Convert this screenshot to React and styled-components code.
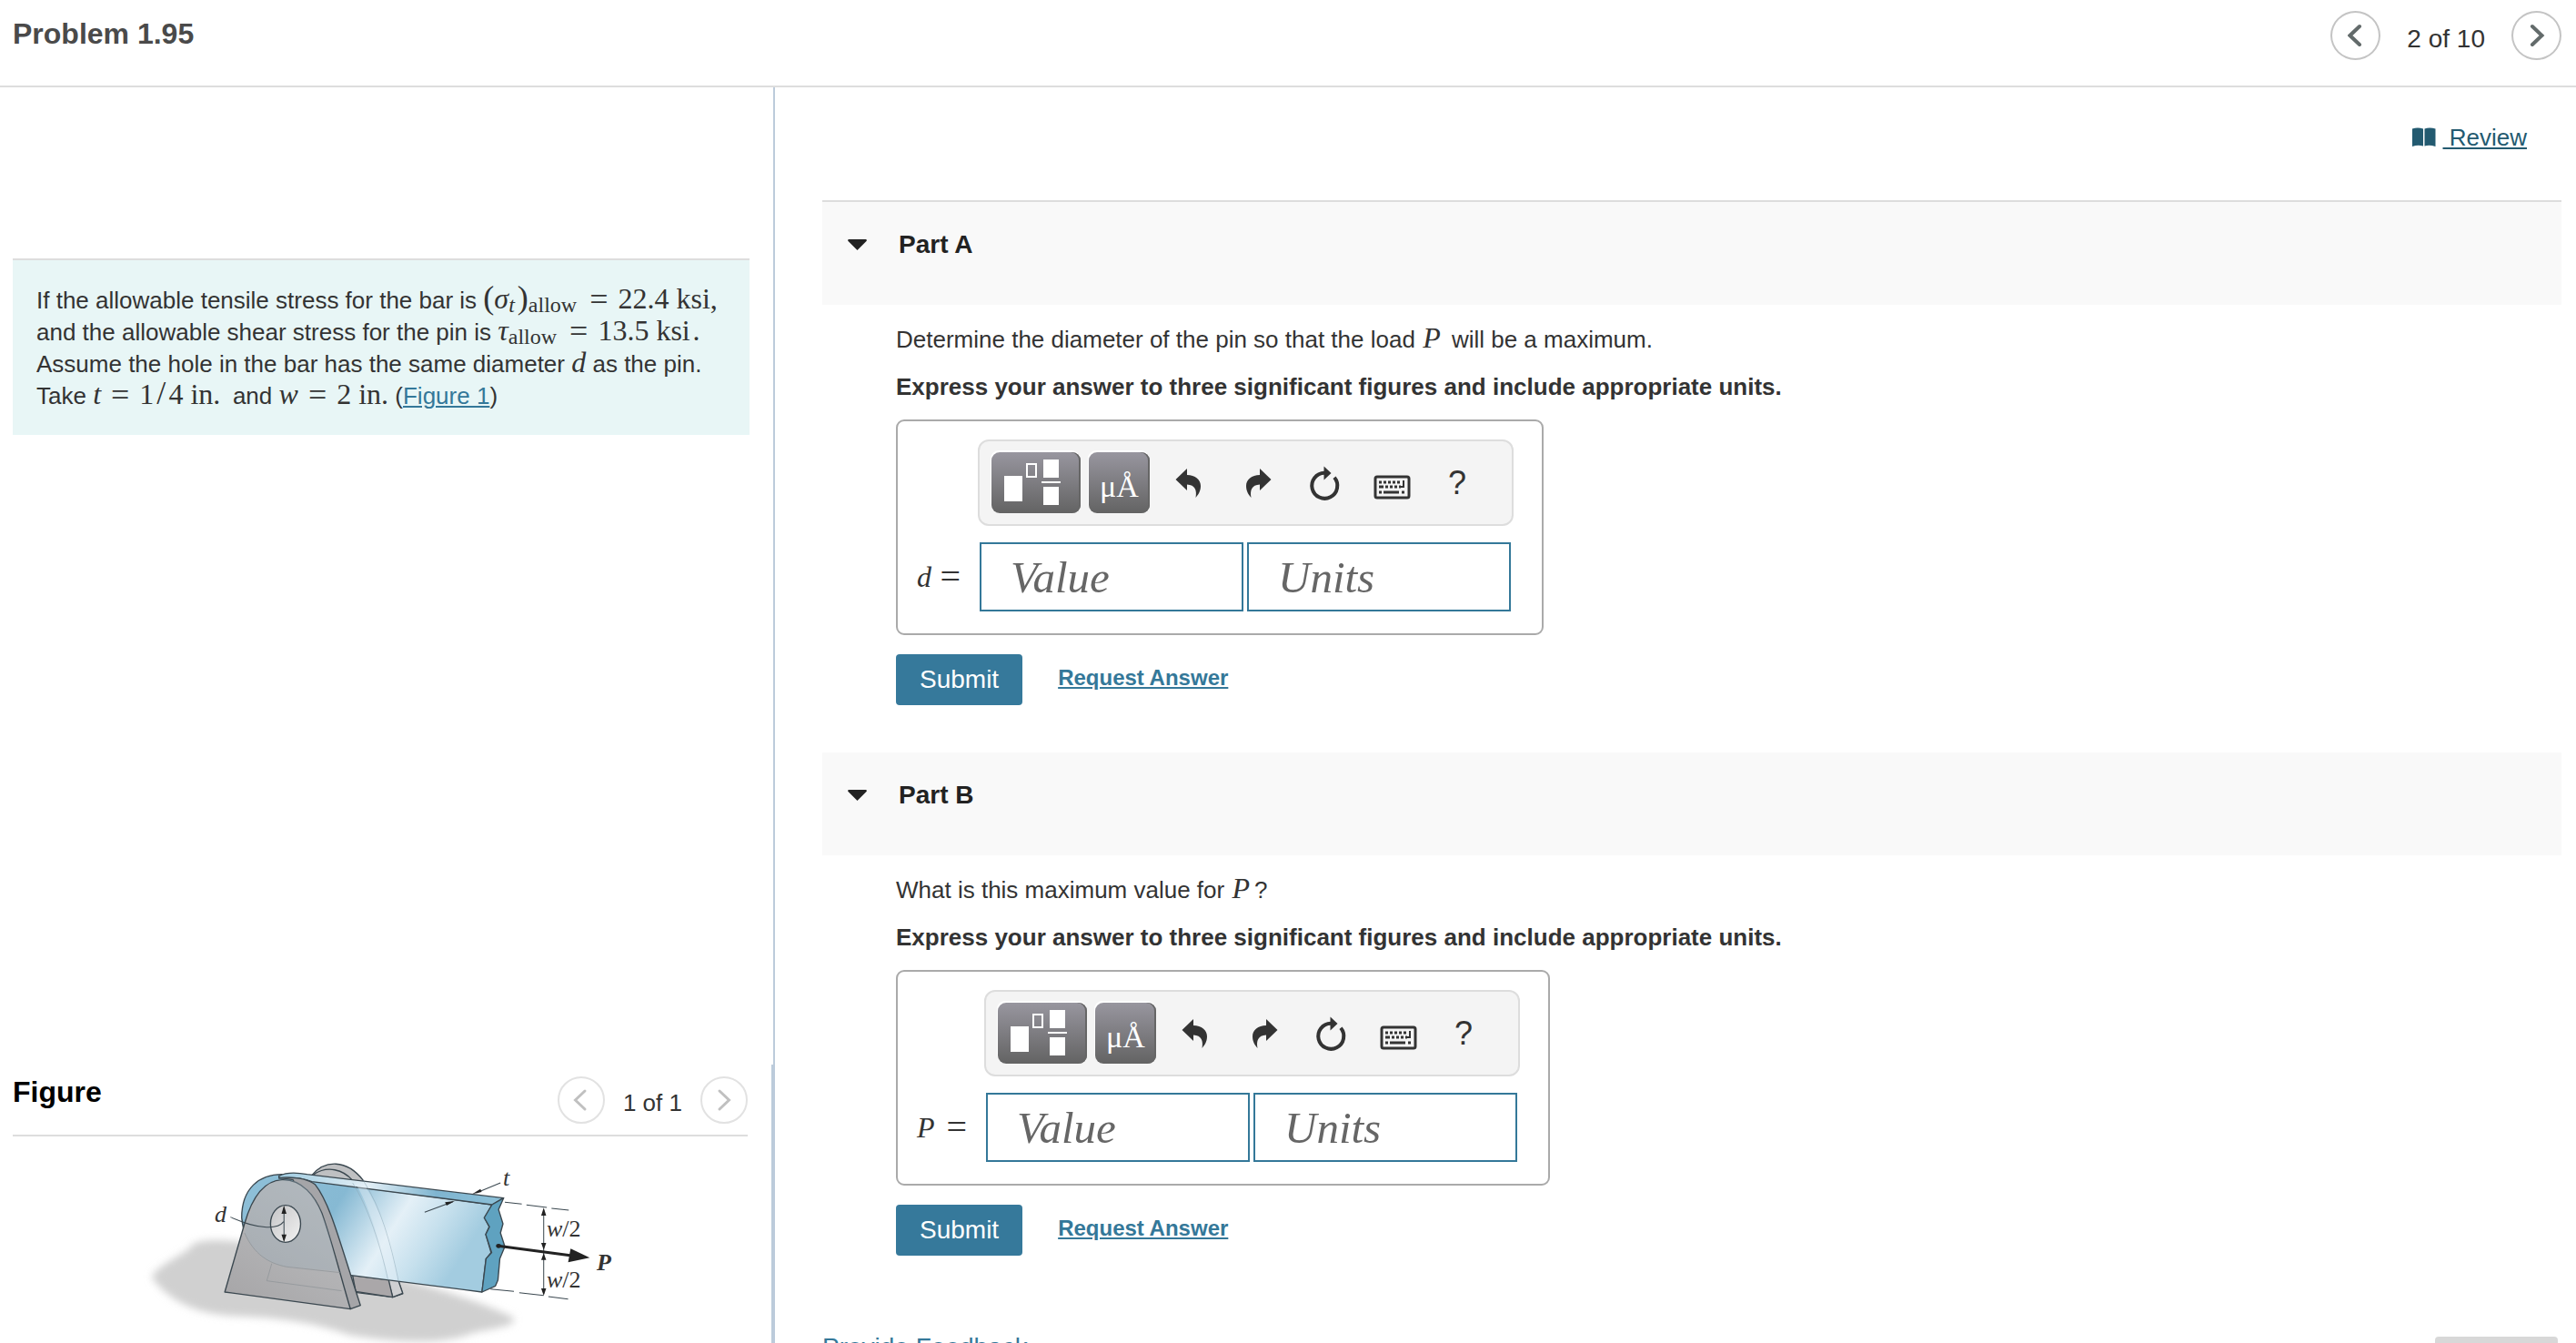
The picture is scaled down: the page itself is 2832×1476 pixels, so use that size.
import React from 'react';
import styled, { createGlobalStyle } from 'styled-components';

const color_text = '#333';
const color_rule = '#ddd';
const color_divider = '#bccbdb';
const color_link = '#347899';
const color_link_dark = '#235a70';

const sans = `'Liberation Sans', Arial, sans-serif`;
const serif = `'Liberation Serif', 'Times New Roman', serif`;

const parts = [
	{
		id: 'a',
		title: 'Part A',
		question: ['Determine the diameter of the pin so that the load ', ' will be a maximum.'],
		symbol: 'd',
		labelWidth: 48,
	},
	{
		id: 'b',
		title: 'Part B',
		question: ['What is this maximum value for ', '?'],
		symbol: 'P',
		labelWidth: 55,
	},
];

const App = () => {
	return (
		<Page>
			<GlobalStyle />
			<Header>
				<Title>Problem 1.95</Title>
				<Pager label="2 of 10" />
			</Header>
			<Columns>
				<Sidebar>
					<Intro>
						<Statement>
							If the allowable tensile stress for the bar is{' '}
							<Formula>
								<Paren>(</Paren>
								<Var>σ</Var>
								<Sub>
									<i>t</i>
								</Sub>
								<Paren>)</Paren>
								<Sub>allow</Sub>
								<Equals>=</Equals>22.4 ksi,
							</Formula>{' '}
							and the allowable shear stress for the pin is{' '}
							<Formula>
								<Var>τ</Var>
								<Sub>allow</Sub>
								<Equals>=</Equals>13.5 ksi&#8202;.
							</Formula>{' '}
							Assume the hole in the bar has the same diameter <Var>d</Var> as
							the pin. Take{' '}
							<Formula>
								<Var>t</Var>
								<Equals>=</Equals>1<Slash>/</Slash>4 in.&#8201;
							</Formula>{' '}
							and{' '}
							<Formula>
								<Var>w</Var>
								<Equals>=</Equals>2 in.
							</Formula>{' '}
							(<Link href="#figure">Figure 1</Link>)
						</Statement>
					</Intro>
					<FigurePane id="figure">
						<FigureHeader>
							<FigureTitle>Figure</FigureTitle>
							<Pager small label="1 of 1" />
						</FigureHeader>
						<BarFigure />
					</FigurePane>
				</Sidebar>
				<Main>
					<ReviewRow>
						<ReviewLink href="#review">
							<BookIcon />
							<span>&nbsp;Review</span>
						</ReviewLink>
					</ReviewRow>
					{parts.map((part, index) => (
						<Part key={part.id} part={part} first={index === 0} />
					))}
					<Footer>
						<FeedbackLink href="#feedback">Provide Feedback</FeedbackLink>
						<NextButton type="button" aria-label="Next" />
					</Footer>
				</Main>
			</Columns>
		</Page>
	);
};

export default App;

const Pager = ({ label, small }) => (
	<PagerRow $small={small}>
		<RoundButton type="button" aria-label="Previous" $small={small}>
			<svg width="18" height="26" viewBox="0 0 18 26">
				<path d="M13 3 L2.5 13 L13 23" />
			</svg>
		</RoundButton>
		<PagerLabel $small={small}>{label}</PagerLabel>
		<RoundButton type="button" aria-label="Next" $small={small}>
			<svg width="18" height="26" viewBox="0 0 18 26">
				<path d="M4 3 L14.5 13 L4 23" />
			</svg>
		</RoundButton>
	</PagerRow>
);

const Part = ({ part, first }) => (
	<section>
		<PartHeader $first={first}>
			<svg width="21" height="12" viewBox="0 0 21 12">
				<path d="M1 0 H20 Q21.5 0.5 20.5 2 L10.5 12 L0.5 2 Q-0.5 0.5 1 0 Z" fill="#222" />
			</svg>
			<h2>{part.title}</h2>
		</PartHeader>
		<PartBody>
			<p>
				{part.question[0]}
				<QuestionVar>P</QuestionVar>
				{part.question[1]}
			</p>
			<p>
				<b>
					Express your answer to three significant figures and include
					appropriate units.
				</b>
			</p>
			<AnswerBox>
				<Toolbar />
				<AnswerLabel htmlFor={`value-${part.id}`} $width={part.labelWidth}>
					<Var>{part.symbol}</Var>
					<LabelEquals>=</LabelEquals>
				</AnswerLabel>
				<Fields>
					<Field id={`value-${part.id}`} type="text" placeholder="Value" />
					<Field type="text" placeholder="Units" aria-label="Units" />
				</Fields>
			</AnswerBox>
			<Actions>
				<SubmitButton type="submit">Submit</SubmitButton>
				<RequestLink href="#answer">Request Answer</RequestLink>
			</Actions>
		</PartBody>
	</section>
);

const arrowPath =
	'M6.5 16 L19 4 V11 C28 11 34 16 34 23 C34 29 31 33 28.5 36 C30 28 28 22 19 21.5 V28 Z';

const Toolbar = () => (
	<ToolbarBox>
		<GreyButton type="button" aria-label="Templates" $wide>
			<svg width="70" height="54" viewBox="0 0 70 54" fill="#fff">
				<rect x="0" y="19" width="20" height="28" />
				<rect x="25" y="6" width="10" height="14" fill="none" stroke="#fff" strokeWidth="2" />
				<rect x="43" y="1" width="17" height="20" />
				<rect x="41" y="25" width="21" height="2" />
				<rect x="43" y="31" width="17" height="20" />
			</svg>
		</GreyButton>
		<GreyButton type="button">μÅ</GreyButton>
		<Tools>
			<ToolButton type="button" aria-label="Undo">
				<svg width="40" height="40" viewBox="0 0 40 40">
					<path d={arrowPath} fill={color_text} />
				</svg>
			</ToolButton>
			<ToolButton type="button" aria-label="Redo">
				<svg width="40" height="40" viewBox="0 0 40 40">
					<path d={arrowPath} fill={color_text} transform="translate(44 0) scale(-1 1)" />
				</svg>
			</ToolButton>
			<ToolButton type="button" aria-label="Reset">
				<svg width="40" height="40" viewBox="0 0 40 40">
					<path
						d="M33 13.8 A14 14 0 1 1 22 8.8"
						fill="none"
						stroke={color_text}
						strokeWidth="4"
					/>
					<path d="M21.5 1.5 L29.5 9 L21.5 16.5 Z" fill={color_text} />
				</svg>
			</ToolButton>
			<ToolButton type="button" aria-label="Keyboard">
				<svg width="40" height="40" viewBox="0 0 40 40" fill="none" stroke={color_text}>
					<rect x="4" y="13" width="37" height="23" rx="2" strokeWidth="3" />
					<path d="M8 19 H32" strokeWidth="3" strokeDasharray="3 2" />
					<path d="M8 24 H32" strokeWidth="3" strokeDasharray="5 2 3 2 3 2 3 2" />
					<path d="M8 30 H11 M13 30 H30 M33 30 H36" strokeWidth="3" />
					<path d="M35 17 V24 H31" strokeWidth="2" />
				</svg>
			</ToolButton>
			<ToolButton type="button">?</ToolButton>
		</Tools>
	</ToolbarBox>
);

const BookIcon = () => (
	<svg width="26" height="22" viewBox="0 0 26 22">
		<path
			d="M0 1.5 Q6 -0.5 12 1.5 V20.5 Q6 19 0 21 Z M13.5 1.5 Q19 -0.5 25.5 1.5 V21 Q19 19 13.5 20.5 Z"
			fill={color_link_dark}
		/>
	</svg>
);

// Bar held by a pin between two brackets, pulled by P
const BarFigure = () => (
	<FigureSvg width="540" height="216" viewBox="0 0 540 216">
		<defs>
			<filter id="soft" x="-10%" y="-20%" width="120%" height="140%">
				<feGaussianBlur stdDeviation="12" />
			</filter>
			<linearGradient id="bar" x1="0" y1="0" x2="1" y2="0.3">
				<stop offset="0" stopColor="#8fc0d8" />
				<stop offset="0.42" stopColor="#86b9d3" />
				<stop offset="0.68" stopColor="#e4f0f7" />
				<stop offset="0.84" stopColor="#c6e0ed" />
				<stop offset="1" stopColor="#a3cce0" />
			</linearGradient>
			<linearGradient id="edge" x1="0" y1="0" x2="1" y2="0">
				<stop offset="0" stopColor="#9fcbe0" />
				<stop offset="0.4" stopColor="#e3eff6" />
				<stop offset="0.7" stopColor="#7fb5d0" />
				<stop offset="1" stopColor="#8cc0d8" />
			</linearGradient>
			<linearGradient id="bracket" x1="0" y1="1" x2="0.6" y2="0">
				<stop offset="0" stopColor="#a5a4a6" />
				<stop offset="0.5" stopColor="#b1b1b3" />
				<stop offset="1" stopColor="#bcbdbf" />
			</linearGradient>
			<linearGradient id="hole" x1="0" y1="0" x2="1" y2="1">
				<stop offset="0" stopColor="#c4c4c6" />
				<stop offset="1" stopColor="#f2f2f2" />
			</linearGradient>
		</defs>
		<g transform="scale(0.3444 0.3333)" stroke="#3b4850" strokeWidth="4" strokeLinejoin="round">
			<path
				d="M48 430 C80 380 170 350 180 322 C230 298 330 312 420 330 L860 440 C960 470 1100 510 1205 565 C1215 600 1110 600 1060 620 C960 655 820 645 680 622 C600 590 480 565 340 560 C200 560 100 510 48 430 Z"
				fill="#d0d0d0"
				stroke="none"
				filter="url(#soft)"
			/>
			{/* rear bracket */}
			<path d="M560 95 C600 45 670 40 724 112 L850 486 L818 497 L410 443 L435 380 Z" fill="#bfc0c2" />
			<path d="M800 430 L818 497 L850 484 L834 436 Z" fill="#cfd0d2" />
			<path d="M690 425 L805 440 L818 497 L700 478 Z" fill="#aaa7a9" />
			<path d="M566 92 C610 62 660 76 690 112" fill="none" />
			{/* bar */}
			<path
				d="M470 92 C390 90 336 140 336 235 C345 330 400 385 480 398 L1103 480 L1116 370 L1132 350 L1115 290 L1126 265 L1112 235 L1135 192 L570 115 Z"
				fill="url(#bar)"
			/>
			<path d="M455 97 C480 84 515 86 545 92 L1172 170 L1135 192 L560 116 C530 105 490 100 455 105 Z" fill="url(#edge)" />
			<path
				d="M1135 192 L1172 170 L1156 208 L1170 255 L1162 285 L1176 330 L1160 370 L1154 440 L1146 460 L1103 480 L1116 370 L1134 350 L1115 290 L1127 265 L1110 235 Z"
				fill="#5fa2c0"
			/>
			<path
				d="M690 120 C740 200 780 330 803 440 M724 112 C780 200 812 320 836 442"
				fill="none"
				stroke="#8aa3b3"
				strokeWidth="2"
				opacity="0.7"
			/>
			<path
				d="M700 122 C745 200 782 330 805 436 L834 440 C812 320 780 210 728 126 Z"
				fill="#e6f0f7"
				stroke="none"
				opacity="0.4"
			/>
			{/* front bracket */}
			<path
				d="M455 103 C510 100 545 105 570 125 C620 190 650 320 715 524 L683 536 L500 110 Z"
				fill="#a5a5a8"
			/>
			<path
				d="M282 480 L345 255 C370 165 410 112 465 110 C530 108 570 165 592 220 C620 300 650 420 683 536 Z"
				fill="url(#bracket)"
			/>
			<path
				d="M346 285 C375 355 420 385 480 397 L645 412 C630 350 610 260 585 205 C550 120 500 100 450 114 C400 130 370 170 346 285 Z"
				fill="#9db0ba"
				stroke="none"
				opacity="0.35"
			/>
			<path
				d="M345 285 C375 355 420 385 480 397 L650 416 M432 386 L416 443 L655 476"
				fill="none"
				stroke="#8c9195"
				strokeWidth="2"
			/>
			<ellipse cx="476" cy="255" rx="48" ry="61" fill="url(#hole)" />
			{/* dimension lines */}
			<g fill="none" strokeWidth="3">
				<path d="M300 233 C350 255 380 265 415 266 Q455 268 470 248" />
				<path d="M471 200 V310" />
				<path d="M1162 120 L1085 153 M920 217 L1010 182" />
				<path d="M1176 184 L1230 190 M1245 193 L1310 201 M1325 204 L1380 210" />
				<path d="M1130 470 L1205 478 M1222 482 L1300 491 M1315 495 L1378 503" />
				<path d="M1300 210 V485" />
			</g>
			<g fill="#222" stroke="none">
				<path d="M471 195 L479 222 H463 Z M471 315 L479 290 H463 Z" />
				<path d="M1072 157 L1098 140 L1102 150 Z M1016 180 L985 184 L990 195 Z" />
				<path d="M1300 202 L1308 228 H1292 Z M1300 341 L1308 318 H1292 Z" />
				<path d="M1300 352 L1308 374 H1292 Z M1300 492 L1308 468 H1292 Z" />
				<path d="M1447 367 L1378 382 L1386 337 Z" />
				<ellipse cx="1156" cy="328" rx="8" ry="7" />
			</g>
			<path d="M1154 328 L1390 360" stroke="#222" strokeWidth="9" />
		</g>
		<g fontFamily={serif} fontStyle="italic" fontSize="26" fill={color_text}>
			<text x="86" y="83">d</text>
			<text x="403" y="43">t</text>
			<text x="451" y="99">
				w<tspan fontStyle="normal">/2</tspan>
			</text>
			<text x="451" y="155">
				w<tspan fontStyle="normal">/2</tspan>
			</text>
			<text x="506" y="136" fontWeight="bold">
				P
			</text>
		</g>
	</FigureSvg>
);

const GlobalStyle = createGlobalStyle`
	* {
		box-sizing: border-box;
	}

	body {
		margin: 0;
		overflow: hidden;
		background: #fff;
		color: ${color_text};
		font-family: ${sans};
		font-size: 26px;
	}

	h1, h2, p {
		margin: 0;
	}

	button, input {
		font: inherit;
		color: inherit;
		margin: 0;
	}

	svg {
		display: block;
		flex: none;
	}
`;

const Page = styled.div`
	height: 100vh;
	display: flex;
	flex-direction: column;
	overflow: hidden;
`;

const Header = styled.header`
	flex: none;
	height: 96px;
	display: flex;
	justify-content: space-between;
	align-items: flex-start;
	padding: 12px 16px 0 14px;
	border-bottom: 2px solid ${color_rule};
`;

const Title = styled.h1`
	padding-top: 7px;
	font-size: 32px;
	line-height: 36px;
	color: #4a4a4a;
`;

const PagerRow = styled.div`
	display: flex;
	align-items: flex-start;
	gap: ${(p) => (p.$small ? '20px' : '29px')};
`;

const PagerLabel = styled.span`
	font-size: ${(p) => (p.$small ? '26px' : '28px')};
	line-height: ${(p) => (p.$small ? '58px' : '62px')};
`;

const RoundButton = styled.button`
	width: ${(p) => (p.$small ? '52px' : '55px')};
	height: ${(p) => (p.$small ? '52px' : '54px')};
	display: flex;
	align-items: center;
	justify-content: center;
	padding: 0;
	border: 2px solid ${(p) => (p.$small ? '#e2e2e2' : '#c4c4c4')};
	border-radius: 50%;
	background: #fff;

	path {
		fill: none;
		stroke: ${(p) => (p.$small ? '#c0c0c0' : '#636b6b')};
		stroke-width: ${(p) => (p.$small ? 3 : 4)};
		stroke-linecap: round;
	}
`;

const Columns = styled.div`
	flex: 1;
	min-height: 0;
	display: grid;
	grid-template-columns: 71fr 165fr;
`;

const Sidebar = styled.aside`
	min-width: 0;
	min-height: 0;
	display: flex;
	flex-direction: column;
`;

const Intro = styled.div`
	flex: 1;
	padding: 188px 26px 0 14px;
	border-right: 2px solid ${color_divider};
`;

const Statement = styled.div`
	padding: 27px 0 25px 26px;
	border-top: 2px solid ${color_rule};
	background: #e8f6f6;
	line-height: 35px;
`;

const Formula = styled.span`
	font-family: ${serif};
	font-size: 32px;
	line-height: 0;
	white-space: nowrap;
`;

const Var = styled.i`
	font-family: ${serif};
	font-size: 32px;
	line-height: 0;
`;

// Slanted capitals lean into the text that follows
const QuestionVar = styled(Var)`
	padding: 0 5px 0 1px;
`;

const Sub = styled.sub`
	padding-right: 3px;
	font-size: 24px;
	line-height: 0;
	vertical-align: -4px;
`;

const Paren = styled.span`
	font-size: 36px;
`;

const Slash = styled.span`
	font-size: 36px;
	padding: 0 3px;
`;

const Equals = styled.span`
	font-size: 36px;
	padding: 0 11px;
	vertical-align: -2px;
`;

const Link = styled.a`
	color: ${color_link};
	text-decoration: underline;
`;

const FigurePane = styled.div`
	flex: none;
	height: 306px;
	padding: 13px 26px 0 14px;
	border-right: 4px solid ${color_divider};
	overflow: hidden;
`;

const FigureHeader = styled.div`
	height: 66px;
	display: flex;
	justify-content: space-between;
	align-items: flex-start;
	border-bottom: 2px solid ${color_rule};
`;

const FigureTitle = styled.h2`
	font-size: 32px;
	line-height: 34px;
	color: #000;
`;

const FigureSvg = styled.svg`
	margin: 11px 0 0 136px;
`;

const Main = styled.main`
	min-width: 0;
	min-height: 0;
	overflow: hidden;
	padding: 0 16px 0 52px;
`;

const ReviewRow = styled.div`
	display: flex;
	justify-content: flex-end;
	padding: 40px 38px 54px 0;
`;

const ReviewLink = styled.a`
	display: flex;
	align-items: center;
	gap: 8px;
	line-height: 30px;
	color: ${color_link_dark};
	text-decoration: none;

	span {
		text-decoration: underline;
	}
`;

const PartHeader = styled.div`
	display: flex;
	align-items: center;
	gap: 35px;
	padding: 31px 28px 50px;
	border-top: ${(p) => (p.$first ? `2px solid ${color_rule}` : 'none')};
	background: #f9f9f9;
	color: #222;

	h2 {
		font-size: 28px;
		line-height: 32px;
	}
`;

const PartBody = styled.div`
	display: flex;
	flex-direction: column;
	align-items: flex-start;
	gap: 20px;
	padding: 22px 0 52px 81px;
	line-height: 32px;
`;

const AnswerBox = styled.div`
	display: grid;
	grid-template-columns: auto 589px;
	column-gap: 19px;
	row-gap: 18px;
	align-items: center;
	padding: 20px 31px 24px 21px;
	border: 2px solid #aaa;
	border-radius: 9px;
`;

const ToolbarBox = styled.div`
	grid-column: 2;
	display: flex;
	align-items: center;
	gap: 9px;
	padding: 12px 13px;
	border: 2px solid ${color_rule};
	border-radius: 12px;
	background: #f4f4f4;
`;

const GreyButton = styled.button`
	width: ${(p) => (p.$wide ? '98px' : '67px')};
	height: 67px;
	display: flex;
	align-items: center;
	justify-content: center;
	padding: ${(p) => (p.$wide ? '0' : '8px 0 0')};
	border: none;
	border-radius: 9px;
	background: linear-gradient(#98969f, #636363);
	box-shadow: -1px -2px 0 #fff, inset -2px 0 0 #666;
	font-family: ${serif};
	font-size: 34px;
	color: #fff;
`;

const Tools = styled.div`
	display: flex;
	gap: 34px;
	padding-left: 13px;
`;

const ToolButton = styled.button`
	width: 40px;
	height: 40px;
	padding: 0;
	border: none;
	background: none;
	font-size: 36px;
	line-height: 40px;
	text-align: center;

	svg {
		overflow: visible;
	}
`;

const AnswerLabel = styled.label`
	width: ${(p) => p.$width}px;
	display: flex;
	align-items: center;
	justify-content: space-between;
	font-family: ${serif};
`;

const LabelEquals = styled.span`
	font-size: 40px;
`;

const Fields = styled.div`
	grid-column: 2;
	display: flex;
	gap: 4px;
	padding: 0 3px 0 2px;
`;

const Field = styled.input`
	flex: 1;
	min-width: 0;
	height: 76px;
	padding: 0 32px;
	border: 2px solid ${color_link};
	border-radius: 0;
	background: #fff;
	font-family: ${serif};
	font-size: 49px;
	font-style: italic;

	&::placeholder {
		color: #666;
		opacity: 1;
	}
`;

const Actions = styled.div`
	display: flex;
	align-items: flex-start;
	gap: 39px;
	padding-top: 1px;
`;

const SubmitButton = styled.button`
	height: 56px;
	padding: 0 26px;
	border: none;
	border-radius: 4px;
	background: #36799b;
	color: #fff;
	font-size: 28px;
`;

const RequestLink = styled(Link)`
	font-size: 24px;
	font-weight: bold;
	line-height: 52px;
`;

const Footer = styled.footer`
	display: flex;
	justify-content: space-between;
	align-items: flex-start;
	padding: 33px 4px 0 0;
`;

const FeedbackLink = styled.a`
	font-size: 28px;
	line-height: 32px;
	color: ${color_link};
	text-decoration: none;
`;

const NextButton = styled.button`
	width: 135px;
	height: 56px;
	margin-top: 4px;
	border: none;
	border-radius: 4px;
	background: #d8d8d8;
`;
